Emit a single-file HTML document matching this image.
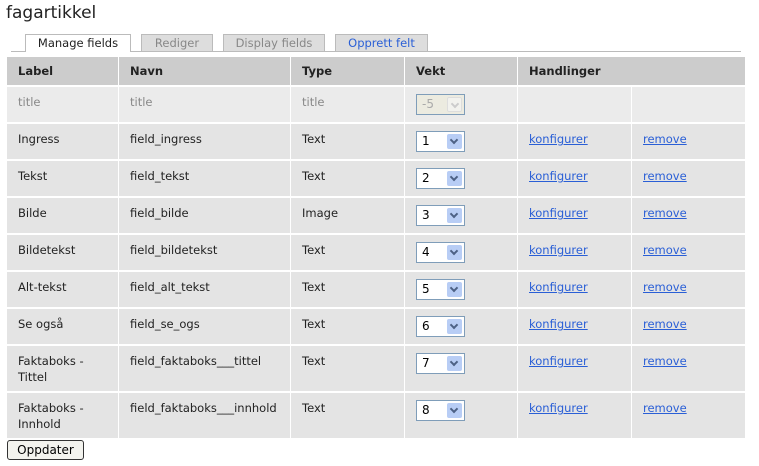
<!DOCTYPE html>
<html><head><meta charset="utf-8"><style>
*{margin:0;padding:0;box-sizing:border-box}
body{width:759px;height:466px;background:#fff;font-family:"DejaVu Sans",Verdana,sans-serif;font-size:11.5px;color:#222;position:relative;overflow:hidden}
.a{position:absolute}
h1{position:absolute;left:6px;top:3px;font-size:17px;font-weight:normal;color:#222}
.tabline{left:11px;top:51px;width:730px;height:1px;background:#bbb}
.tab{position:absolute;top:34px;height:17px;border:1px solid #bbb;border-bottom:none;background:#ddd;color:#888;font-size:11.5px;text-align:center;line-height:16px}
.tab.on{background:#fff;color:#222;height:18px}
table{position:absolute;left:6px;top:57px;width:739px;border-collapse:collapse;table-layout:fixed}
td,th{border:1px solid #fff;border-top:none;border-bottom:2px solid #fff;vertical-align:top;text-align:left;padding:0 0 0 11px}
th{background:#ccc;height:29px;font-weight:bold;vertical-align:middle;padding-top:0}
td{background:#e4e4e4;height:37px;padding-top:7px;line-height:16px}
tr.t td{background:#ebebeb;color:#888}
tr.b td{height:47px;padding-top:7px}
a{color:#2a5fd6;text-decoration:underline}
.sel{display:inline-block;position:relative;width:49px;height:21px;border:1px solid #7f9db9;background:#fff;margin-top:0;font-size:12px;line-height:19px;padding-left:5px;color:#000}
.sel i{position:absolute;right:2px;top:2px;width:15px;height:15px;background:#b8cdf5;border-radius:2px}
.sel i:after{content:"";position:absolute;left:4px;top:3px;width:4px;height:4px;border-right:2px solid #4d6185;border-bottom:2px solid #4d6185;transform:rotate(45deg)}
.sel.d{background:#ecebe0;color:#aaa}
.sel.d i{background:#f2f2ee;border:1px solid #ddd}
.sel.d i:after{border-color:#ccc}
button{position:absolute;left:7px;top:440px;width:77px;height:20px;font-family:inherit;font-size:12px;background:#f3f3ee;border:1px solid #333;border-radius:3px;color:#000}
</style></head><body>
<h1>fagartikkel</h1>
<div class="a tabline"></div>
<div class="tab on" style="left:25px;width:106px">Manage fields</div>
<div class="tab" style="left:141px;width:72px">Rediger</div>
<div class="tab" style="left:223px;width:102px">Display fields</div>
<div class="tab" style="left:335px;width:93px;color:#2a5fd6">Opprett felt</div>
<table>
<colgroup><col style="width:112px"><col style="width:172px"><col style="width:114px"><col style="width:113px"><col style="width:114px"><col style="width:114px"></colgroup>
<tr><th>Label</th><th>Navn</th><th>Type</th><th>Vekt</th><th colspan="2">Handlinger</th></tr>
<tr class="t"><td>title</td><td>title</td><td>title</td><td><span class="sel d">-5<i></i></span></td><td></td><td></td></tr>
<tr><td>Ingress</td><td>field_ingress</td><td>Text</td><td><span class="sel">1<i></i></span></td><td><a>konfigurer</a></td><td><a>remove</a></td></tr>
<tr><td>Tekst</td><td>field_tekst</td><td>Text</td><td><span class="sel">2<i></i></span></td><td><a>konfigurer</a></td><td><a>remove</a></td></tr>
<tr><td>Bilde</td><td>field_bilde</td><td>Image</td><td><span class="sel">3<i></i></span></td><td><a>konfigurer</a></td><td><a>remove</a></td></tr>
<tr><td>Bildetekst</td><td>field_bildetekst</td><td>Text</td><td><span class="sel">4<i></i></span></td><td><a>konfigurer</a></td><td><a>remove</a></td></tr>
<tr><td>Alt-tekst</td><td>field_alt_tekst</td><td>Text</td><td><span class="sel">5<i></i></span></td><td><a>konfigurer</a></td><td><a>remove</a></td></tr>
<tr><td>Se også</td><td>field_se_ogs</td><td>Text</td><td><span class="sel">6<i></i></span></td><td><a>konfigurer</a></td><td><a>remove</a></td></tr>
<tr class="b"><td>Faktaboks -<br>Tittel</td><td>field_faktaboks___tittel</td><td>Text</td><td><span class="sel">7<i></i></span></td><td><a>konfigurer</a></td><td><a>remove</a></td></tr>
<tr class="b"><td>Faktaboks -<br>Innhold</td><td>field_faktaboks___innhold</td><td>Text</td><td><span class="sel">8<i></i></span></td><td><a>konfigurer</a></td><td><a>remove</a></td></tr>
</table>
<button>Oppdater</button>
</body></html>
